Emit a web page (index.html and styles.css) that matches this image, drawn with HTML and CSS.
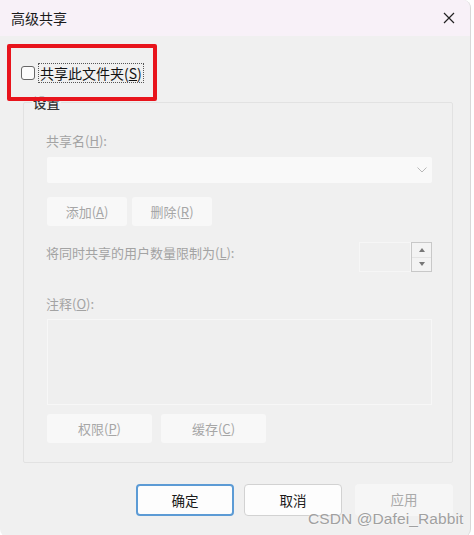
FILE: index.html
```html
<!DOCTYPE html>
<html lang="zh-CN">
<head>
<meta charset="utf-8">
<title>高级共享</title>
<link rel="stylesheet" href="styles.css">
</head>
<body>
<div class="window">
  <div class="titlebar">
    <span class="title">高级共享</span>
    <svg class="close" width="12" height="12" viewBox="0 0 12 12"><path d="M1 1 L11 11 M11 1 L1 11" stroke="#222" stroke-width="1.2" fill="none"/></svg>
  </div>
  <div class="body">
    <div class="highlight">
      <label class="check"><span class="box"></span><span class="focus">共享此文件夹(<u>S</u>)</span></label>
    </div>
    <fieldset class="group">
      <legend>设置</legend>
      <div class="label">共享名(<u>H</u>):</div>
      <div class="combo">
        <svg width="10" height="6" viewBox="0 0 10 6"><path d="M0.5 0.5 L5 5 L9.5 0.5" stroke="#b8b8b8" stroke-width="1" fill="none"/></svg>
      </div>
      <div class="btnrow">
        <span class="btn small">添加(<u>A</u>)</span>
        <span class="btn small">删除(<u>R</u>)</span>
      </div>
      <div class="limitrow">
        <span class="label">将同时共享的用户数量限制为(<u>L</u>):</span>
        <div class="spin">
          <div class="spinfield"></div>
          <div class="arrows">
            <span class="arr"><svg width="6" height="4" viewBox="0 0 6 4"><path d="M0 4 L3 0 L6 4Z" fill="#777"/></svg></span>
            <span class="arr"><svg width="6" height="4" viewBox="0 0 6 4"><path d="M0 0 L3 4 L6 0Z" fill="#777"/></svg></span>
          </div>
        </div>
      </div>
      <div class="label note">注释(<u>O</u>):</div>
      <div class="textarea"></div>
      <div class="btnrow2">
        <span class="btn wide">权限(<u>P</u>)</span>
        <span class="btn wide">缓存(<u>C</u>)</span>
      </div>
    </fieldset>
    <div class="footer">
      <span class="fbtn primary">确定</span>
      <span class="fbtn">取消</span>
      <span class="fbtn disabled"><span class="ftext">应用</span></span>
    </div>
  </div>
  <div class="watermark">CSDN @Dafei_Rabbit</div>
</div>
</body>
</html>
```
FILE: styles.css
```css
html, body {
  margin: 0;
  padding: 0;
  background: #ffffff;
}
body {
  width: 474px;
  height: 535px;
  overflow: hidden;
  font-family: "Noto Sans CJK SC", "Noto Sans", sans-serif;
  font-size: 13px;
}
u { text-decoration: underline; text-underline-offset: 1px; }
.window {
  position: relative;
  width: 471px;
  height: 537px;
  background: #f0f0f0;
  border-right: 1px solid #d8d8d8;
  border-radius: 0 8px 8px 8px;
  box-sizing: border-box;
  overflow: hidden;
}
.titlebar {
  height: 36px;
  background: #f8f1f8;
  display: flex;
  align-items: center;
  justify-content: space-between;
  padding: 0 14px 0 11px;
}
.title {
  font-size: 14px;
  color: #1a1a1a;
}
.close { margin-right: 1px; }
.body {
  padding: 8px 0 0 7px;
}
.highlight {
  position: relative;
  z-index: 2;
  width: 150px;
  height: 57px;
  box-sizing: border-box;
  border: 4px solid #e8141c;
  border-radius: 2px;
  display: flex;
  align-items: center;
  padding-left: 10px;
}
.check {
  display: flex;
  align-items: center;
  gap: 4px;
  color: #111;
  font-size: 14px;
}
.box {
  width: 12px;
  height: 12px;
  border: 1px solid #666;
  border-radius: 3px;
  background: #fbfbfb;
}
.focus {
  outline: 1px dotted #555;
  padding: 0 1px;
  line-height: 18px;
}
.group {
  margin: -8px 0 0 16px;
  width: 430px;
  height: 370px;
  box-sizing: border-box;
  border: 1px solid #e2e2e2;
  border-radius: 2px;
  padding: 21px 20px 0 23px;
  position: relative;
}
.group legend {
  padding: 0 1px;
  margin-left: -15px;
  font-size: 13.5px;
  color: #333;
  font-weight: 500;
  line-height: 18px;
}
.label {
  color: #a3a3a3;
  font-size: 13px;
  line-height: 18px;
  margin-left: -1px;
}
.combo {
  margin-top: 7px;
  height: 26px;
  background: #f9f9f9;
  border-radius: 2px;
  display: flex;
  align-items: center;
  justify-content: flex-end;
  padding-right: 5px;
}
.btnrow {
  display: flex;
  gap: 5px;
  margin-top: 14px;
}
.btn {
  display: flex;
  align-items: center;
  justify-content: center;
  background: #f8f8f8;
  border-radius: 3px;
  color: #a6a6a6;
  font-size: 13px;
  height: 29px;
}
.small { width: 80px; }
.wide { width: 105px; }
.limitrow {
  display: flex;
  align-items: flex-start;
  justify-content: space-between;
  margin-top: 16px;
}
.limitrow .label { margin-top: 2px; }
.spin {
  display: flex;
  height: 30px;
  width: 73px;
}
.spinfield {
  flex: 1;
  border: 1px solid #f6f6f6;
  background: #efefef;
}
.arrows {
  width: 19px;
  display: flex;
  flex-direction: column;
  border: 1px solid #c8c8c8;
  background: #f3f3f3;
}
.arr {
  flex: 1;
  display: flex;
  align-items: center;
  justify-content: center;
}
.arr + .arr { border-top: 1px solid #e4e4e4; }
.note { margin-top: 23px; }
.textarea {
  margin-top: 6px;
  height: 84px;
  border: 1px solid #f7f7f7;
  background: #efefef;
}
.btnrow2 {
  display: flex;
  gap: 9px;
  margin-top: 9px;
}
.footer {
  display: flex;
  gap: 10px;
  margin: 21px 0 0 129px;
}
.fbtn {
  width: 98px;
  height: 32px;
  box-sizing: border-box;
  border: 1px solid #d2d2d2;
  border-radius: 4px;
  background: #fdfdfd;
  display: flex;
  align-items: center;
  justify-content: center;
  font-size: 13.5px;
  color: #1a1a1a;
}
.fbtn.primary {
  border: 2px solid #5c9bd5;
}
.fbtn.disabled {
  border-color: transparent;
  background: #f6f6f6;
  color: #aaa;
  margin-left: 3px;
  align-items: flex-start;
}
.ftext {
  line-height: 14px;
  margin-top: 7px;
}
.watermark {
  position: absolute;
  left: 308px;
  top: 512px;
  font-family: "Liberation Sans", Arial, sans-serif;
  font-size: 15.5px;
  line-height: 13px;
  color: #a0a0a0;
  text-shadow: 0 0 2px #fff;
  letter-spacing: 0.1px;
}
```
